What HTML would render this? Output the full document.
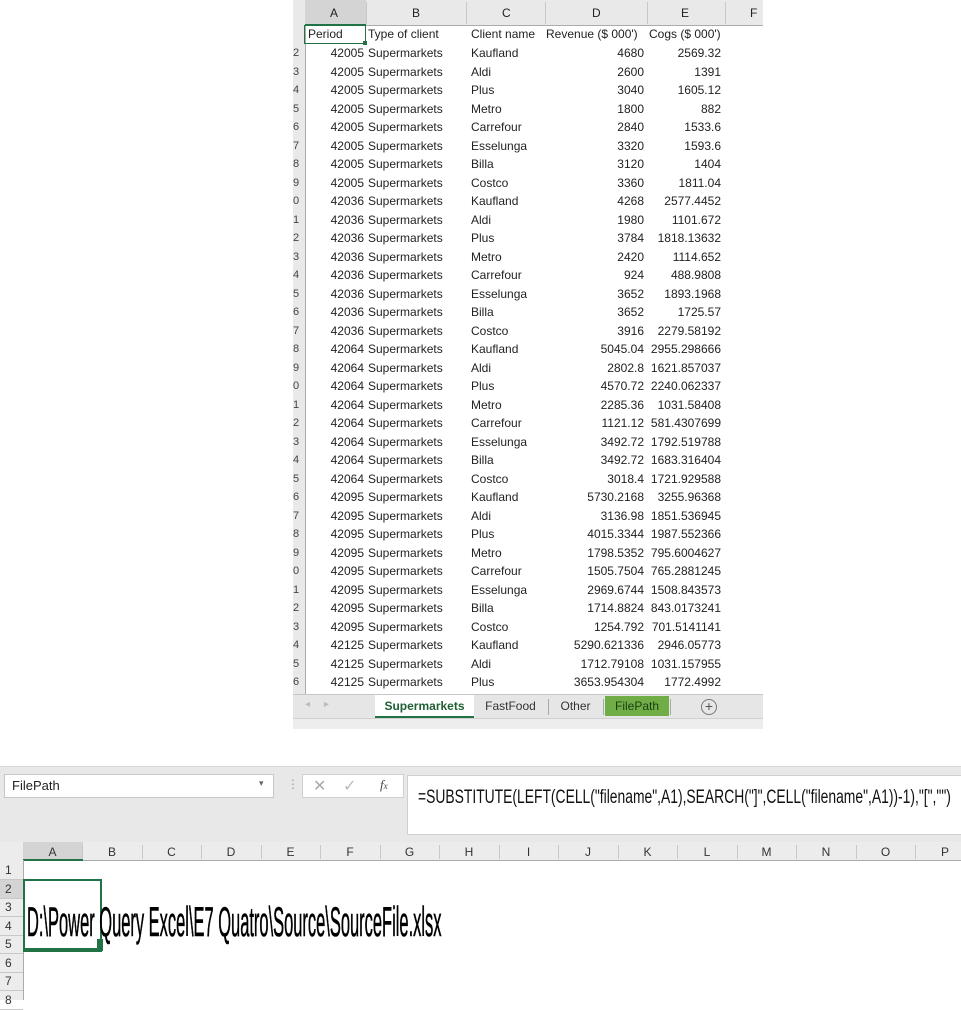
<!DOCTYPE html>
<html><head><meta charset="utf-8"><style>
body{margin:0;width:961px;height:1000px;background:#fff;position:relative;overflow:hidden;font-family:"Liberation Sans",sans-serif;color:#222}
.a{position:absolute;white-space:nowrap}
.r{position:absolute;left:293px;width:470px;height:18px;font-size:12px;line-height:18px}
.r span{position:absolute}
.n{text-align:right}
</style></head><body>
<div class="a" style="left:293px;top:0;width:470px;height:25px;background:#e9e9e9;border-bottom:1px solid #ababab"></div>
<div class="a" style="left:305px;top:0;width:61px;height:24px;background:#d4d4d4;border-bottom:2px solid #217346"></div>
<div class="a" style="left:293px;top:25px;width:12px;height:670px;background:#e9e9e9;border-right:1px solid #ababab"></div>
<div class="a" style="left:330px;top:6px;font-size:12px">A</div>
<div class="a" style="left:412px;top:6px;font-size:12px">B</div>
<div class="a" style="left:502px;top:6px;font-size:12px">C</div>
<div class="a" style="left:592px;top:6px;font-size:12px">D</div>
<div class="a" style="left:681px;top:6px;font-size:12px">E</div>
<div class="a" style="left:750px;top:6px;font-size:12px">F</div>
<div class="a" style="left:366px;top:2px;width:1px;height:22px;background:#c8c8c8"></div>
<div class="a" style="left:466px;top:2px;width:1px;height:22px;background:#c8c8c8"></div>
<div class="a" style="left:545px;top:2px;width:1px;height:22px;background:#c8c8c8"></div>
<div class="a" style="left:647px;top:2px;width:1px;height:22px;background:#c8c8c8"></div>
<div class="a" style="left:725px;top:2px;width:1px;height:22px;background:#c8c8c8"></div>
<div class="a" style="left:304px;top:25px;width:60px;height:17px;border:1.5px solid #217346"></div>
<div class="a" style="left:363px;top:41px;width:4px;height:4px;background:#217346"></div>
<div class="r" style="top:25px"><span style="left:15px">Period</span><span style="left:75px">Type of client</span><span style="left:178px">Client name</span><span style="left:253px">Revenue ($ 000')</span><span style="left:356px">Cogs ($ 000')</span></div>
<div id="rows"></div>
<script>
var d=[[42005,'Kaufland',4680,'2569.32'],[42005,'Aldi',2600,1391],[42005,'Plus',3040,'1605.12'],[42005,'Metro',1800,882],[42005,'Carrefour',2840,'1533.6'],[42005,'Esselunga',3320,'1593.6'],[42005,'Billa',3120,1404],[42005,'Costco',3360,'1811.04'],
[42036,'Kaufland',4268,'2577.4452'],[42036,'Aldi',1980,'1101.672'],[42036,'Plus',3784,'1818.13632'],[42036,'Metro',2420,'1114.652'],[42036,'Carrefour',924,'488.9808'],[42036,'Esselunga',3652,'1893.1968'],[42036,'Billa',3652,'1725.57'],[42036,'Costco',3916,'2279.58192'],
[42064,'Kaufland','5045.04','2955.298666'],[42064,'Aldi','2802.8','1621.857037'],[42064,'Plus','4570.72','2240.062337'],[42064,'Metro','2285.36','1031.58408'],[42064,'Carrefour','1121.12','581.4307699'],[42064,'Esselunga','3492.72','1792.519788'],[42064,'Billa','3492.72','1683.316404'],[42064,'Costco','3018.4','1721.929588'],
[42095,'Kaufland','5730.2168','3255.96368'],[42095,'Aldi','3136.98','1851.536945'],[42095,'Plus','4015.3344','1987.552366'],[42095,'Metro','1798.5352','795.6004627'],[42095,'Carrefour','1505.7504','765.2881245'],[42095,'Esselunga','2969.6744','1508.843573'],[42095,'Billa','1714.8824','843.0173241'],[42095,'Costco','1254.792','701.5141141'],
[42125,'Kaufland','5290.621336','2946.05773'],[42125,'Aldi','1712.79108','1031.157955'],[42125,'Plus','3653.954304','1772.4992']];
var h='';
d.forEach(function(r,i){var n=i+2;var t=44+i*18.5;
h+='<div class="r" style="top:'+t+'px"><span style="left:0;font-size:11px;color:#444">'+(n%10)+'</span><span class="n" style="left:12px;width:59px">'+r[0]+'</span><span style="left:75px">Supermarkets</span><span style="left:178px">'+r[1]+'</span><span class="n" style="left:253px;width:98px">'+r[2]+'</span><span class="n" style="left:355px;width:73px">'+r[3]+'</span></div>';});
document.getElementById('rows').innerHTML=h;
</script>
<div class="a" style="left:293px;top:694px;width:470px;height:24px;background:#e6e6e6;border-top:1px solid #c6c6c6"></div>
<div class="a" style="left:293px;top:718px;width:470px;height:10px;background:#ededed;border-top:1px solid #d0d0d0"></div>
<div class="a" style="left:305px;top:699px;font-size:10px;color:#bbb">◂&nbsp;&nbsp;&nbsp;&nbsp;&nbsp;▸</div>
<div class="a" style="left:375px;top:695px;width:99px;height:21px;background:#fff;border-bottom:2px solid #217346;color:#1e5f34;font-weight:bold;font-size:12px;line-height:22px;text-align:center">Supermarkets</div>
<div class="a" style="left:474px;top:699px;width:73px;font-size:12px;text-align:center;color:#333">FastFood</div>
<div class="a" style="left:548px;top:699px;width:1px;height:16px;background:#aaa"></div>
<div class="a" style="left:548px;top:699px;width:55px;font-size:12px;text-align:center;color:#333">Other</div>
<div class="a" style="left:603px;top:699px;width:1px;height:16px;background:#aaa"></div>
<div class="a" style="left:605px;top:696px;width:64px;height:20px;background:#70ad47;font-size:12px;line-height:20px;text-align:center;color:#1b3d10">FilePath</div>
<div class="a" style="left:670px;top:699px;width:1px;height:16px;background:#aaa"></div>
<div class="a" style="left:701px;top:699px;width:14px;height:14px;border:1px solid #777;border-radius:50%;font-size:14px;line-height:13px;text-align:center;color:#555">+</div>
<div class="a" style="left:0;top:766px;width:961px;height:76px;background:#e8e8e8;border-top:1px solid #d6d6d6"></div>
<div class="a" style="left:4px;top:774px;width:268px;height:22px;background:#fff;border:1px solid #c6c6c6;font-size:13px;line-height:22px;text-indent:7px">FilePath</div>
<div class="a" style="left:259px;top:778px;font-size:9px;color:#666">▾</div>
<div class="a" style="left:287px;top:777px;font-size:12px;color:#999">⋮</div>
<div class="a" style="left:302px;top:774px;width:100px;height:22px;background:#fff;border:1px solid #d0d0d0"></div>
<div class="a" style="left:313px;top:776px;font-size:16px;color:#aaa">✕</div>
<div class="a" style="left:343px;top:776px;font-size:16px;color:#bbb">✓</div>
<div class="a" style="left:380px;top:777px;font-size:13px;font-style:italic;font-family:'Liberation Serif',serif;color:#444">f<span style="font-size:9px">x</span></div>
<div class="a" style="left:407px;top:775px;width:554px;height:58px;background:#fff;border:1px solid #d0d0d0"></div>
<div class="a" style="left:418px;top:787px;font-size:19px;transform:scaleX(.73);transform-origin:0 0;color:#111">=SUBSTITUTE(LEFT(CELL("filename",A1),SEARCH("]",CELL("filename",A1))-1),"[","")</div>
<div class="a" style="left:0;top:842px;width:961px;height:18px;background:#ececec;border-bottom:1px solid #ababab"></div>
<div class="a" style="left:23px;top:842px;width:60px;height:17px;background:#d4d4d4;border-bottom:2px solid #217346"></div>
<div class="a" style="left:0;top:860px;width:23px;height:140px;background:#ececec;border-right:1px solid #ababab"></div>
<div class="a" style="left:0;top:880px;width:23px;height:18px;background:#d4d4d4"></div>
<div id="ch"></div>
<script>
var L='ABCDEFGHIJKLMNOP',s='';
for(var i=0;i<16;i++){var x=23+i*59.5;s+='<div class="a" style="left:'+x+'px;top:845px;width:59px;text-align:center;font-size:12px;color:#333">'+L[i]+'</div><div class="a" style="left:'+(x+59)+'px;top:845px;width:1px;height:14px;background:#c8c8c8"></div>';}
for(var r=1;r<=8;r++){var y=862+(r-1)*18.5;s+='<div class="a" style="left:5px;top:'+(y+1)+'px;font-size:12px;color:#333">'+r+'</div><div class="a" style="left:0;top:'+(y+17)+'px;width:23px;height:1px;background:#c8c8c8"></div>';}
document.getElementById('ch').innerHTML=s;
</script>
<div class="a" style="left:23px;top:879px;width:75px;height:67px;border:2px solid #217346;border-bottom:4px solid #217346"></div>
<div class="a" style="left:97px;top:939px;width:6px;height:12px;background:#217346"></div>
<div class="a" style="left:27px;top:898px;font-size:42px;transform:scaleX(.392);transform-origin:0 0;color:#000;-webkit-text-stroke:0.6px #000">D:\Power Query Excel\E7 Quatro\Source\SourceFile.xlsx</div>
</body></html>
